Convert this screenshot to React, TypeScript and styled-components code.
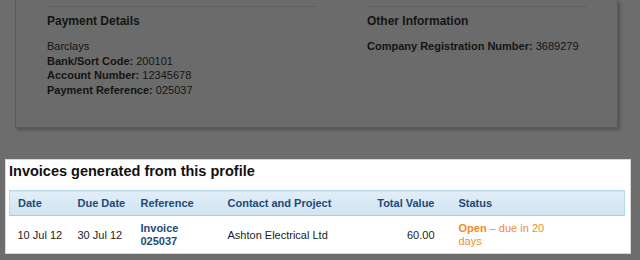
import styled, { createGlobalStyle } from "styled-components";

const GlobalStyle = createGlobalStyle`
    html, body {
        margin: 0;
        padding: 0;
        background: #6d6d6d;
        font-family: "Liberation Sans", Arial, Helvetica, sans-serif;
        overflow: hidden;
    }
`;

const Page = styled.div`
    width: 640px;
    height: 260px;
    padding-left: 5px;
    box-sizing: border-box;
`;

const ProfileCard = styled.section`
    margin: 0 22px 0 10px;
    height: 128px;
    box-sizing: border-box;
    padding: 6px 31px 0 31px;
    background: #6b6b6b;
    border-left: 1px solid #5a5a5a;
    border-right: 1px solid #5a5a5a;
    border-bottom: 1px solid #5a5a5a;
    box-shadow: 2px 2px 3px rgba(0, 0, 0, 0.25);
    display: grid;
    grid-template-columns: 270px 220px;
    column-gap: 50px;
    align-content: start;
`;

const DetailColumn = styled.div`
    border-top: 1px solid #606060;
    padding-top: 7px;
    color: #141414;
    font-size: 11px;
    line-height: 14.5px;
`;

const DetailTitle = styled.h3`
    margin: 0 0 11px 0;
    font-size: 12px;
    line-height: 14px;
    font-weight: bold;
`;

const DetailLine = styled.div`
    & b {
        font-weight: bold;
    }
`;

const InvoicesPanel = styled.section`
    margin-top: 31px;
    width: 626px;
    height: 95px;
    box-sizing: border-box;
    background: #ffffff;
    border: 1px solid #d8d8d8;
    padding: 2px 5px 0 3px;
`;

const PanelTitle = styled.h2`
    margin: 0 0 10px 0;
    font-size: 14.5px;
    line-height: 18px;
    font-weight: bold;
    color: #111;
`;

const InvoiceTable = styled.table`
    width: 616px;
    table-layout: fixed;
    border-collapse: collapse;
    font-size: 11px;
`;

const HeadRow = styled.tr`
    background: linear-gradient(#e1eef8, #d0e4f1);
    border: 1px solid #b9d9ee;
    border-bottom-color: #a8cde6;
`;

const HeadCell = styled.th<{ $right?: boolean }>`
    height: 24px;
    padding: 0 ${(p) => (p.$right ? "16px" : "0")} 0 8px;
    text-align: ${(p) => (p.$right ? "right" : "left")};
    white-space: nowrap;
    font-weight: bold;
    color: #1e4a78;
`;

const Cell = styled.td<{ $right?: boolean }>`
    padding: 6px ${(p) => (p.$right ? "16px" : "0")} 4px 8px;
    line-height: 13px;
    text-align: ${(p) => (p.$right ? "right" : "left")};
    color: #222;
    vertical-align: middle;
`;

const InvoiceLink = styled.a`
    display: inline-block;
    max-width: 60px;
    color: #1c4a80;
    font-weight: bold;
    text-decoration: none;
`;

const Status = styled.span`
    color: #f58a1f;
    & b {
        font-weight: bold;
    }
`;

export default function App() {
    return (
        <Page>
            <GlobalStyle />
            <ProfileCard>
                <DetailColumn>
                    <DetailTitle>Payment Details</DetailTitle>
                    <DetailLine>Barclays</DetailLine>
                    <DetailLine><b>Bank/Sort Code:</b> 200101</DetailLine>
                    <DetailLine><b>Account Number:</b> 12345678</DetailLine>
                    <DetailLine><b>Payment Reference:</b> 025037</DetailLine>
                </DetailColumn>
                <DetailColumn>
                    <DetailTitle>Other Information</DetailTitle>
                    <DetailLine><b>Company Registration Number:</b> 3689279</DetailLine>
                </DetailColumn>
            </ProfileCard>
            <InvoicesPanel>
                <PanelTitle>Invoices generated from this profile</PanelTitle>
                <InvoiceTable>
                    <colgroup>
                        <col style={{ width: 60 }} />
                        <col style={{ width: 63 }} />
                        <col style={{ width: 87 }} />
                        <col style={{ width: 140 }} />
                        <col style={{ width: 91 }} />
                        <col style={{ width: 103 }} />
                        <col />
                    </colgroup>
                    <thead>
                        <HeadRow>
                            <HeadCell>Date</HeadCell>
                            <HeadCell>Due Date</HeadCell>
                            <HeadCell>Reference</HeadCell>
                            <HeadCell>Contact and Project</HeadCell>
                            <HeadCell $right>Total Value</HeadCell>
                            <HeadCell>Status</HeadCell>
                            <HeadCell />
                        </HeadRow>
                    </thead>
                    <tbody>
                        <tr>
                            <Cell>10 Jul 12</Cell>
                            <Cell>30 Jul 12</Cell>
                            <Cell><InvoiceLink href="#">Invoice 025037</InvoiceLink></Cell>
                            <Cell>Ashton Electrical Ltd</Cell>
                            <Cell $right>60.00</Cell>
                            <Cell><Status><b>Open</b> – due in 20 days</Status></Cell>
                            <Cell />
                        </tr>
                    </tbody>
                </InvoiceTable>
            </InvoicesPanel>
        </Page>
    );
}
